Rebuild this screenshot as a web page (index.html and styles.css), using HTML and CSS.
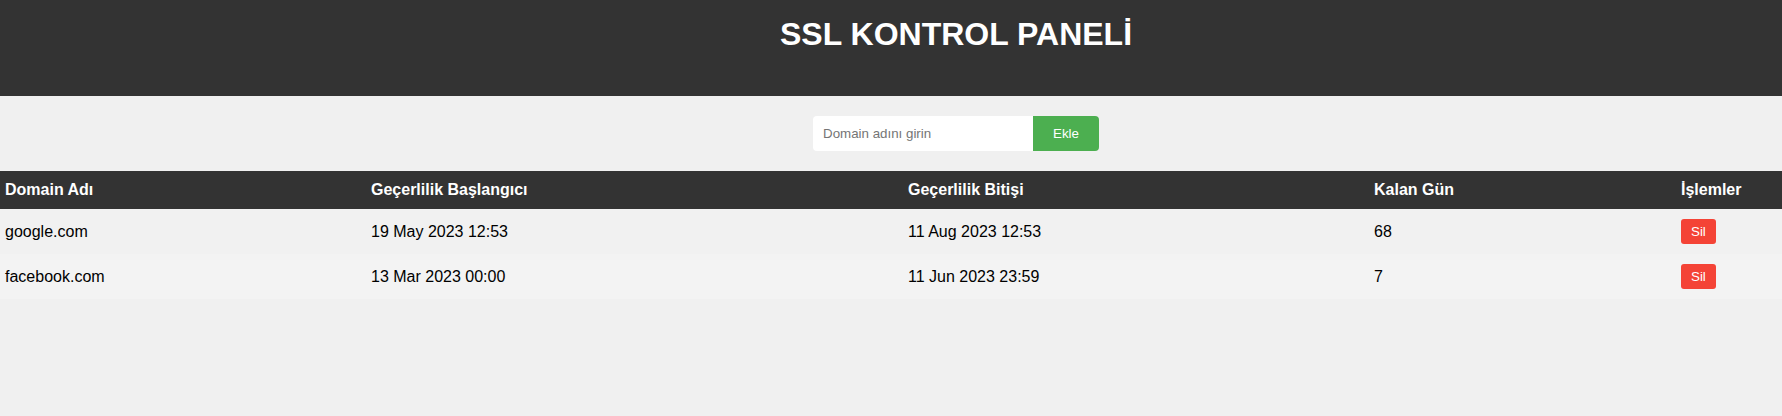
FILE: index.html
```html
<!DOCTYPE html>
<html lang="tr">
<head>
<meta charset="utf-8">
<title>SSL Kontrol Paneli</title>
<link rel="stylesheet" href="styles.css">
</head>
<body>
<header class="topbar">
  <h1 class="title">SSL KONTROL PANELİ</h1>
</header>
<form class="add-form">
  <input class="domain-input" type="text" placeholder="Domain adını girin">
  <button class="add-btn" type="button">Ekle</button>
</form>
<table class="ssl-table">
  <thead>
    <tr>
      <th class="c1">Domain Adı</th>
      <th class="c2">Geçerlilik Başlangıcı</th>
      <th class="c3">Geçerlilik Bitişi</th>
      <th class="c4">Kalan Gün</th>
      <th class="c5">İşlemler</th>
    </tr>
  </thead>
  <tbody>
    <tr>
      <td>google.com</td>
      <td>19 May 2023 12:53</td>
      <td>11 Aug 2023 12:53</td>
      <td>68</td>
      <td><button class="del-btn" type="button">Sil</button></td>
    </tr>
    <tr>
      <td>facebook.com</td>
      <td>13 Mar 2023 00:00</td>
      <td>11 Jun 2023 23:59</td>
      <td>7</td>
      <td><button class="del-btn" type="button">Sil</button></td>
    </tr>
  </tbody>
</table>
</body>
</html>
```

FILE: styles.css
```css
html, body {
  margin: 0;
  padding: 0;
}
body {
  background: #f0f0f0;
  font-family: "Liberation Sans", Arial, sans-serif;
  color: #000;
}
.topbar {
  background: #333333;
  color: #fff;
  height: 96px;
  box-sizing: border-box;
  padding: 16px 0 0 130px;
  text-align: center;
}
.title {
  margin: 0;
  font-size: 32px;
  font-weight: bold;
  line-height: 37px;
}
.add-form {
  display: flex;
  justify-content: center;
  margin: 20px 0;
  padding-left: 130px;
}
.domain-input {
  height: 35px;
  box-sizing: border-box;
  width: 220px;
  padding: 10px;
  border: none;
  border-radius: 4px 0 0 4px;
  background: #fff;
  font-family: "Liberation Sans", Arial, sans-serif;
  font-size: 13.333px;
  outline: none;
}
.domain-input::placeholder {
  color: #757575;
}
.add-btn {
  width: 66px;
  height: 35px;
  border: none;
  border-radius: 0 4px 4px 0;
  background: #4caf50;
  color: #fff;
  font-family: "Liberation Sans", Arial, sans-serif;
  font-size: 13.333px;
  padding: 0;
}
.ssl-table {
  width: 100%;
  border-collapse: collapse;
  table-layout: fixed;
  font-size: 16px;
}
.ssl-table th,
.ssl-table td {
  box-sizing: border-box;
  padding: 10px 5px;
  text-align: left;
  vertical-align: middle;
}
.ssl-table th {
  background: #333333;
  color: #fff;
  font-weight: bold;
  height: 38px;
}
.c1 { width: 366px; }
.c2 { width: 537px; }
.c3 { width: 466px; }
.c4 { width: 307px; }
.c5 { width: 106px; }
.ssl-table tbody tr:nth-child(odd) {
  background: #f1f1f1;
}
.ssl-table tbody tr:nth-child(even) {
  background: #f3f3f3;
}
.ssl-table td {
  height: 45px;
}
.del-btn {
  display: block;
  height: 25px;
  padding: 0 10px;
  border: none;
  border-radius: 3px;
  background: #f44336;
  color: #fff;
  font-family: "Liberation Sans", Arial, sans-serif;
  font-size: 13.333px;
}
```
